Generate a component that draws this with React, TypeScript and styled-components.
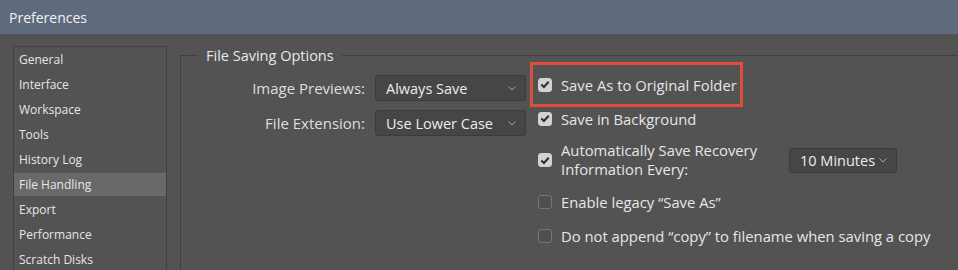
import React from "react";
import styled, { createGlobalStyle } from "styled-components";

const GlobalStyle = createGlobalStyle`
  html, body { margin: 0; padding: 0; background: #535353; }
  body {
    width: 958px; height: 270px; overflow: hidden;
    font-family: "Open Sans", "Noto Sans", sans-serif;
    color: #e4e4e4;
  }
`;

const Window = styled.div`
  width: 958px; height: 270px; overflow: hidden;
  display: flex; flex-direction: column;
  background: #535353;
`;

const TitleBar = styled.div`
  flex: none; height: 34px; box-sizing: border-box;
  display: flex; align-items: center;
  padding-left: 9px;
  background: #5f6a7d;
  color: #f2f2f2;
  font-size: 14px;
`;

const Body = styled.div`
  flex: 1; min-height: 0;
  display: flex; align-items: flex-start;
  gap: 13px;
  padding: 12px 0 0 13px;
`;

const Sidebar = styled.ul`
  flex: none;
  list-style: none; margin: 0;
  padding: 1px 0 0 0;
  width: 154px; height: 260px; box-sizing: border-box;
  border: 1px solid #404040;
  display: flex; flex-direction: column; gap: 2px;
`;

const NavItem = styled.li<{ $active?: boolean }>`
  height: 23px;
  display: flex; align-items: center;
  padding-left: 5px;
  font-size: 12px;
  color: #e6e6e6;
  background: ${(p) => (p.$active ? "#696969" : "transparent")};
`;

const Group = styled.fieldset`
  flex: 1; min-width: 0;
  margin: 0;
  height: 300px; box-sizing: border-box;
  border: 1px solid #404040;
  border-right: none; border-bottom: none;
  padding: 8px 0 0 17px;
`;

const Legend = styled.legend`
  padding: 0 8px;
  font-size: 14.5px; line-height: 19px;
  color: #e8e8e8;
`;

const Content = styled.div`
  display: flex; align-items: flex-start;
`;

const FormGrid = styled.div`
  display: grid;
  grid-template-columns: 167px 151px;
  column-gap: 10px; row-gap: 9px;
  align-items: center;
  margin-top: 2px;
`;

const FieldLabel = styled.span`
  text-align: right;
  font-size: 15px;
  color: #dedede;
`;

const SelectBox = styled.div<{ $width: number; $height: number }>`
  width: ${(p) => p.$width}px; height: ${(p) => p.$height}px;
  box-sizing: border-box;
  display: flex; align-items: center; justify-content: space-between;
  padding: 0 9px 0 10px;
  background: #464646;
  border: 1px solid #3b3b3b;
  border-radius: 3px;
  font-size: 14.5px;
  color: #ececec;
`;

const Options = styled.div`
  margin-left: 12px;
  display: flex; flex-direction: column; gap: 11px;
`;

const OptionRow = styled.div<{ $highlight?: boolean }>`
  position: relative;
  min-height: 23px;
  display: flex; align-items: center;
  gap: 9px;
  font-size: 14.8px;
  color: #e6e6e6;
  ${(p) =>
    p.$highlight
      ? `&::after {
          content: "";
          position: absolute;
          top: -11px; bottom: -11px; left: -8px;
          width: 213px;
          box-sizing: border-box;
          border: 3px solid #dc4f3c;
          pointer-events: none;
        }`
      : ""}
`;

const Box = styled.span<{ $checked?: boolean }>`
  flex: none;
  width: 14px; height: 14px; box-sizing: border-box;
  border-radius: 3px;
  display: flex; align-items: center; justify-content: center;
  background: ${(p) => (p.$checked ? "#d2d2d2" : "#4f4f4f")};
  border: 1px solid ${(p) => (p.$checked ? "#d2d2d2" : "#767676")};
`;

const MultiLabel = styled.span`
  width: 219px;
  line-height: 19px;
`;

const Chevron = () => (
  <svg width="8" height="5" viewBox="0 0 8 5">
    <polyline points="0.5,0.5 4,4 7.5,0.5" fill="none" stroke="#a8a8a8" strokeWidth="1" />
  </svg>
);

const Select = ({ value, width, height = 26 }: { value: string; width: number; height?: number }) => (
  <SelectBox $width={width} $height={height}>
    <span>{value}</span>
    <Chevron />
  </SelectBox>
);

const Check = ({ checked }: { checked?: boolean }) => (
  <Box $checked={checked}>
    {checked && (
      <svg width="10" height="9" viewBox="0 0 10 9">
        <polyline points="1.3,4.6 3.9,7 8.7,1.8" fill="none" stroke="#2f2f2f" strokeWidth="2" />
      </svg>
    )}
  </Box>
);

const navItems = [
  "General",
  "Interface",
  "Workspace",
  "Tools",
  "History Log",
  "File Handling",
  "Export",
  "Performance",
  "Scratch Disks",
];

export default function App() {
  return (
    <>
      <GlobalStyle />
      <Window>
        <TitleBar>Preferences</TitleBar>
        <Body>
          <Sidebar>
            {navItems.map((n) => (
              <NavItem key={n} $active={n === "File Handling"}>
                {n}
              </NavItem>
            ))}
          </Sidebar>
          <Group>
            <Legend>File Saving Options</Legend>
            <Content>
              <FormGrid>
                <FieldLabel>Image Previews:</FieldLabel>
                <Select value="Always Save" width={151} />
                <FieldLabel>File Extension:</FieldLabel>
                <Select value="Use Lower Case" width={151} />
              </FormGrid>
              <Options>
                <OptionRow $highlight>
                  <Check checked />
                  Save As to Original Folder
                </OptionRow>
                <OptionRow>
                  <Check checked />
                  Save in Background
                </OptionRow>
                <OptionRow>
                  <Check checked />
                  <MultiLabel>
                    Automatically Save Recovery
                    <br />
                    Information Every:
                  </MultiLabel>
                  <Select value="10 Minutes" width={108} height={25} />
                </OptionRow>
                <OptionRow>
                  <Check />
                  Enable legacy “Save As”
                </OptionRow>
                <OptionRow>
                  <Check />
                  Do not append “copy” to filename when saving a copy
                </OptionRow>
              </Options>
            </Content>
          </Group>
        </Body>
      </Window>
    </>
  );
}
